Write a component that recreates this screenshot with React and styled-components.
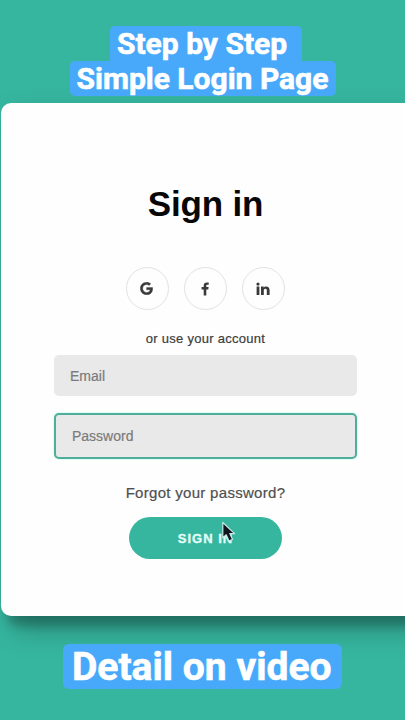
import React from 'react'
import styled, {createGlobalStyle} from 'styled-components'
import {FaGoogle} from 'react-icons/fa'

const GlobalStyle = createGlobalStyle`
    * {
        box-sizing: border-box;
    }
    body {
        margin: 0;
        background: #36b69f;
        font-family: "Liberation Sans", Arial, sans-serif;
    }
`

const Page = styled.div`
    height: 720px;
    padding-top: 26px;
    overflow: hidden;
    display: flex;
    flex-direction: column;
`

const Caption = styled.div`
    display: flex;
    flex-direction: column;
    align-items: center;
    font-family: Roboto, sans-serif;
    font-weight: 700;
    color: #fff;
    -webkit-text-stroke: 0.6px #fff;
`

const CaptionLine = styled.div`
    width: ${props => props.$width}px;
    height: ${props => props.$height}px;
    margin-left: ${props => props.$shift || 0}px;
    padding-left: ${props => props.$pad}px;
    padding-top: ${props => props.$drop || 0}px;
    border-radius: ${props => props.$radius};
    background: #48a9fb;
    font-size: ${props => props.$size}px;
    line-height: ${props => props.$height}px;
    white-space: pre;
`

const Card = styled.div`
    flex: none;
    width: 425px;
    height: 513px;
    margin: 7px 0 28px 1px;
    padding-left: 53px;
    border-radius: 10px;
    background: #fefefe;
    box-shadow: 10px 14px 28px rgba(0, 0, 0, 0.25), 7px 10px 10px rgba(0, 0, 0, 0.22);
`

const Form = styled.form`
    width: 303px;
    padding-top: 80px;
    display: flex;
    flex-direction: column;
    align-items: center;
`

const Title = styled.h1`
    margin: 0;
    color: #070707;
    font-size: 35px;
    line-height: 42px;
    letter-spacing: -0.2px;
`

const Socials = styled.div`
    display: flex;
    gap: 15px;
    margin-top: 42px;
`

const Social = styled.a`
    width: 43px;
    height: 43px;
    padding-right: 1px;
    border: 1px solid #e2e2e2;
    border-radius: 50%;
    display: flex;
    align-items: center;
    justify-content: center;
    color: #3a3a3a;
    font-size: 13px;
`

const GoogleIcon = styled(FaGoogle)`
    margin-right: 1px;
    stroke: currentColor;
    stroke-width: 14px;
`

const Hint = styled.span`
    margin-top: 20px;
    color: #3c3c3c;
    font-size: 13px;
    line-height: 18px;
    letter-spacing: 0.27px;
    -webkit-text-stroke: 0.2px #3c3c3c;
`

const Input = styled.input`
    width: 100%;
    height: ${props => props.$active ? 46 : 41}px;
    margin-top: ${props => props.$active ? 17 : 7}px;
    padding: 0 16px;
    border: ${props => props.$active ? '2px solid #4fae98' : 'none'};
    border-radius: 5px;
    outline: none;
    box-shadow: ${props => props.$active ? '0 0 2px #9cf3df' : 'none'};
    background: #e9e9e9;
    font-family: inherit;
    font-size: 14px;
    &::placeholder {
        color: #7b7b7b;
        -webkit-text-stroke: 0.2px #7b7b7b;
    }
`

const Forgot = styled.a`
    margin-top: 24px;
    color: #505050;
    font-size: 15px;
    line-height: 20px;
    letter-spacing: 0.3px;
    -webkit-text-stroke: 0.2px #505050;
`

const Button = styled.button`
    position: relative;
    width: 153px;
    height: 42px;
    margin-top: 14px;
    padding: 0;
    border: none;
    border-radius: 22px;
    background: #36b69f;
    color: #e4fff9;
    font-family: inherit;
    font-size: 13px;
    font-weight: 700;
    letter-spacing: 1px;
    -webkit-text-stroke: 0.3px #e4fff9;
`

const Cursor = styled.svg`
    position: absolute;
    left: 92px;
    top: 4px;
`

function FacebookIcon() {
    return (
        <svg width="8" height="14" viewBox="0 0 8 14" fill="currentColor">
            <path d="M7.7 0.6V2.8H6.4C5.6 2.8 5.3 3.2 5.3 3.9V5H7.6L7.3 7.4H5.3V13.6H2.7V7.4H0.6V5H2.7V3.5C2.7 1.5 3.9 0.5 5.8 0.5C6.6 0.5 7.3 0.5 7.7 0.6Z"/>
        </svg>
    )
}

function LinkedinIcon() {
    return (
        <svg width="14" height="14" viewBox="0 0 14 14" fill="currentColor">
            <circle cx="2" cy="2.1" r="1.6"/>
            <path d="M0.6 4.6H3.4V13H0.6ZM5 4.6H7.7V5.7C8.1 4.9 9 4.4 10.2 4.4C12.4 4.4 13.6 5.8 13.6 8.2V13H10.8V8.6C10.8 7.4 10.3 6.8 9.4 6.8C8.4 6.8 7.8 7.5 7.8 8.6V13H5Z"/>
        </svg>
    )
}

function Pointer() {
    return (
        <Cursor width="15" height="22" viewBox="0 0 15 22">
            <path d="M1.8 1.5V17L5.2 13.8L8 20L11.6 18.4L8.8 12.6H13.6Z" fill="#10171c" stroke="#c9e8e5" strokeWidth="1.2" strokeLinejoin="round"/>
        </Cursor>
    )
}

function App() {
    return (
        <Page>
            <GlobalStyle/>
            <Caption>
                <CaptionLine $width={192} $height={35} $shift={7} $pad={7} $size={30} $radius="5px 5px 0 0">Step by Step </CaptionLine>
                <CaptionLine $width={266} $height={35} $pad={7} $size={30} $radius="5px">Simple Login Page</CaptionLine>
            </Caption>
            <Card>
                <Form>
                    <Title>Sign in</Title>
                    <Socials>
                        <Social><GoogleIcon/></Social>
                        <Social><FacebookIcon/></Social>
                        <Social><LinkedinIcon/></Social>
                    </Socials>
                    <Hint>or use your account</Hint>
                    <Input type="email" placeholder="Email"/>
                    <Input type="password" placeholder="Password" $active/>
                    <Forgot>Forgot your password?</Forgot>
                    <Button type="button">
                        SIGN IN
                        <Pointer/>
                    </Button>
                </Form>
            </Card>
            <Caption>
                <CaptionLine $width={279} $height={45} $pad={9} $drop={1} $size={39} $radius="6px">Detail on video</CaptionLine>
            </Caption>
        </Page>
    )
}

export default App
